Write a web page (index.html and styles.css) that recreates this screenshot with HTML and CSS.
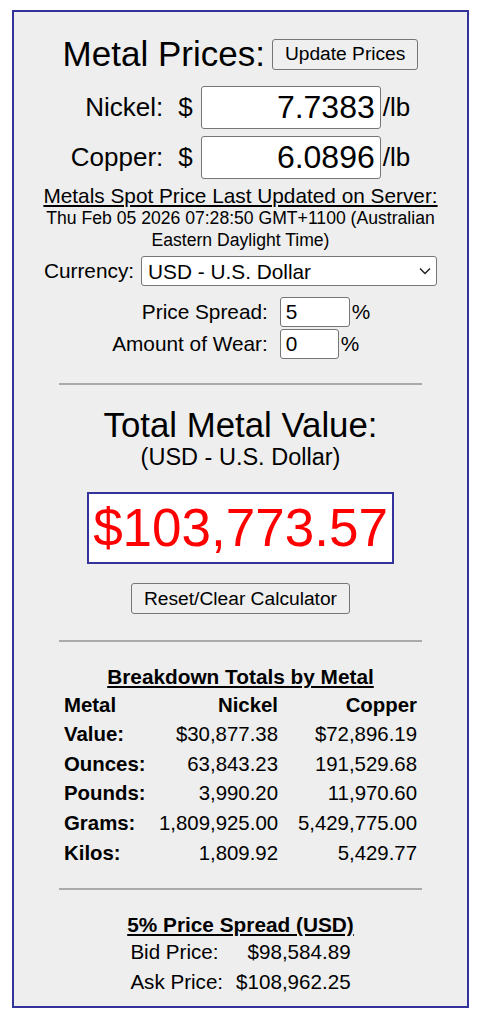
FILE: index.html
```html
<!DOCTYPE html>
<html lang="en">
<head>
  <meta charset="UTF-8" />
  <meta name="viewport" content="width=device-width, initial-scale=1" />
  <title>Metal Value Calculator</title>
  <link rel="stylesheet" href="styles.css">
</head>
<body>
  <div class="calc">
    <div class="head">
      <span class="head-title">Metal Prices:</span>
      <button class="btn btn-update">Update Prices</button>
    </div>

    <div class="prices">
      <label class="metal-label" for="nickel">Nickel:</label>
      <span class="cur">$</span>
      <input id="nickel" class="price" type="text" value="7.7383" />
      <span class="unit">/lb</span>

      <label class="metal-label" for="copper">Copper:</label>
      <span class="cur">$</span>
      <input id="copper" class="price" type="text" value="6.0896" />
      <span class="unit">/lb</span>
    </div>

    <div class="spot">Metals Spot Price Last Updated on Server:</div>
    <div class="spot-date">Thu Feb 05 2026 07:28:50 GMT+1100 (Australian Eastern Daylight Time)</div>

    <div class="currency">
      <label for="currency">Currency:</label>
      <div class="select-wrap">
        <select id="currency">
          <option>USD - U.S. Dollar</option>
          <option>AUD - Australian Dollar</option>
          <option>EUR - Euro</option>
        </select>
        <svg class="chev" width="12" height="8" viewBox="0 0 12 8"><path d="M1 1.5 L6 6.5 L11 1.5" fill="none" stroke="#222" stroke-width="1.5"/></svg>
      </div>
    </div>

    <div class="spread">
      <label for="spread">Price Spread:</label>
      <div class="pct"><input id="spread" class="small spread-in" type="text" value="5" /><span>%</span></div>
      <label for="wear">Amount of Wear:</label>
      <div class="pct"><input id="wear" class="small wear-in" type="text" value="0" /><span>%</span></div>
    </div>

    <hr class="rule rule-1">

    <div class="total-title">Total Metal Value:</div>
    <div class="total-cur">(USD - U.S. Dollar)</div>
    <div class="total-box">$103,773.57</div>

    <button class="btn btn-reset">Reset/Clear Calculator</button>

    <hr class="rule rule-2">

    <div class="sub-title breakdown-title">Breakdown Totals by Metal</div>
    <div class="breakdown">
      <b class="row-label">Metal</b><b>Nickel</b><b>Copper</b>
      <b class="row-label">Value:</b><span>$30,877.38</span><span>$72,896.19</span>
      <b class="row-label">Ounces:</b><span>63,843.23</span><span>191,529.68</span>
      <b class="row-label">Pounds:</b><span>3,990.20</span><span>11,970.60</span>
      <b class="row-label">Grams:</b><span>1,809,925.00</span><span>5,429,775.00</span>
      <b class="row-label">Kilos:</b><span>1,809.92</span><span>5,429.77</span>
    </div>

    <hr class="rule rule-3">

    <div class="sub-title spread-title">5% Price Spread (USD)</div>
    <div class="bidask">
      <span class="ba-label">Bid Price:</span><span>$98,584.89</span>
      <span class="ba-label">Ask Price:</span><span>$108,962.25</span>
    </div>
  </div>
</body>
</html>
```

FILE: styles.css
```css
* { box-sizing: border-box; }

body {
  margin: 0;
  background: #fff;
  color: #000;
  font-family: "Liberation Sans", Arial, sans-serif;
}

.calc {
  margin: 10px 8px 0 12px;
  border: 2px solid #333399;
  background: #eee;
  padding: 25px 0 9px;
  text-align: center;
}

/* buttons and fields */
.btn {
  font-family: inherit;
  font-size: 19.2px;
  height: 31px;
  padding: 0 10px;
  background: #efefef;
  border: 1px solid #767676;
  border-radius: 3px;
  color: #000;
  cursor: pointer;
}

.btn:hover { background: #e5e5e5; }

.btn-update { padding: 0 12px; }

input, select {
  font-family: inherit;
  color: #000;
  background: #fff;
  border: 1px solid #767676;
  border-radius: 3px;
  margin: 0;
}

.head {
  display: flex;
  align-items: center;
  justify-content: center;
  gap: 7px;
  height: 34px;
}

.head-title {
  font-size: 35px;
  line-height: 34px;
}

.prices {
  margin-top: 15px;
  display: grid;
  grid-template-columns: auto auto 180px auto;
  justify-content: center;
  align-items: center;
  row-gap: 7px;
  font-size: 26px;
}

.metal-label {
  text-align: right;
  margin-right: 15px;
}

.cur { margin-right: 8px; }

.unit {
  margin-left: 2px;
  text-align: left;
}

.price {
  width: 180px;
  height: 43px;
  font-size: 32px;
  text-align: right;
  padding: 0 5px;
}

.spot {
  margin-top: 5px;
  font-size: 20.8px;
  line-height: 24px;
  text-decoration: underline;
}

.spot-date {
  font-size: 17.6px;
  line-height: 21.7px;
  padding: 0 20px;
}

.currency {
  margin-top: 5px;
  display: flex;
  justify-content: center;
  align-items: center;
  gap: 7px;
  font-size: 20.8px;
}

.select-wrap {
  position: relative;
  display: flex;
}

.select-wrap select {
  appearance: none;
  -webkit-appearance: none;
  width: 296px;
  height: 30px;
  font-size: 20.8px;
  padding: 0 24px 0 6px;
}

.chev {
  position: absolute;
  right: 6px;
  top: 11px;
  pointer-events: none;
}

.spread {
  margin-top: 11px;
  display: grid;
  grid-template-columns: auto 89px;
  justify-content: center;
  align-items: center;
  column-gap: 12px;
  row-gap: 2px;
  font-size: 20.8px;
}

.spread label { text-align: right; }

.pct {
  display: flex;
  align-items: center;
  gap: 2px;
}

.small {
  height: 30px;
  font-size: 20.8px;
  padding: 0 5px;
}

.spread-in { width: 70px; }
.wear-in { width: 59px; }

.rule {
  width: 80%;
  height: 0;
  border: 0;
  border-top: 2px solid #aaa;
  margin: 0 auto;
}

.rule-1 { margin-top: 24px; }
.rule-2 { margin-top: 26px; }
.rule-3 { margin-top: 20px; }

.total-title {
  margin-top: 21px;
  font-size: 34.8px;
  line-height: 38px;
}

.total-cur {
  font-size: 23.5px;
  line-height: 27px;
}

.total-box {
  width: 307px;
  height: 72px;
  margin: 21px auto 0;
  border: 2px solid #333399;
  background: #fff;
  color: #f00;
  font-size: 53px;
  line-height: 68px;
}

.btn-reset {
  display: block;
  margin: 19px auto 0;
  padding: 0 11.5px;
}

.sub-title {
  font-size: 20.8px;
  line-height: 24px;
  font-weight: bold;
  text-decoration: underline;
}

.breakdown-title { margin-top: 23px; }

.breakdown {
  margin-top: 1px;
  display: grid;
  grid-template-columns: 95px 119px 139px;
  grid-auto-rows: 29.6px;
  justify-content: center;
  align-items: center;
  font-size: 20.4px;
  text-align: right;
}

.breakdown .row-label { text-align: left; }

.spread-title { margin-top: 23.5px; }

.bidask {
  display: grid;
  grid-template-columns: auto auto;
  grid-auto-rows: 30px;
  justify-content: center;
  align-items: center;
  column-gap: 13px;
  font-size: 20.6px;
  text-align: right;
}

.bidask .ba-label { text-align: left; }
```
